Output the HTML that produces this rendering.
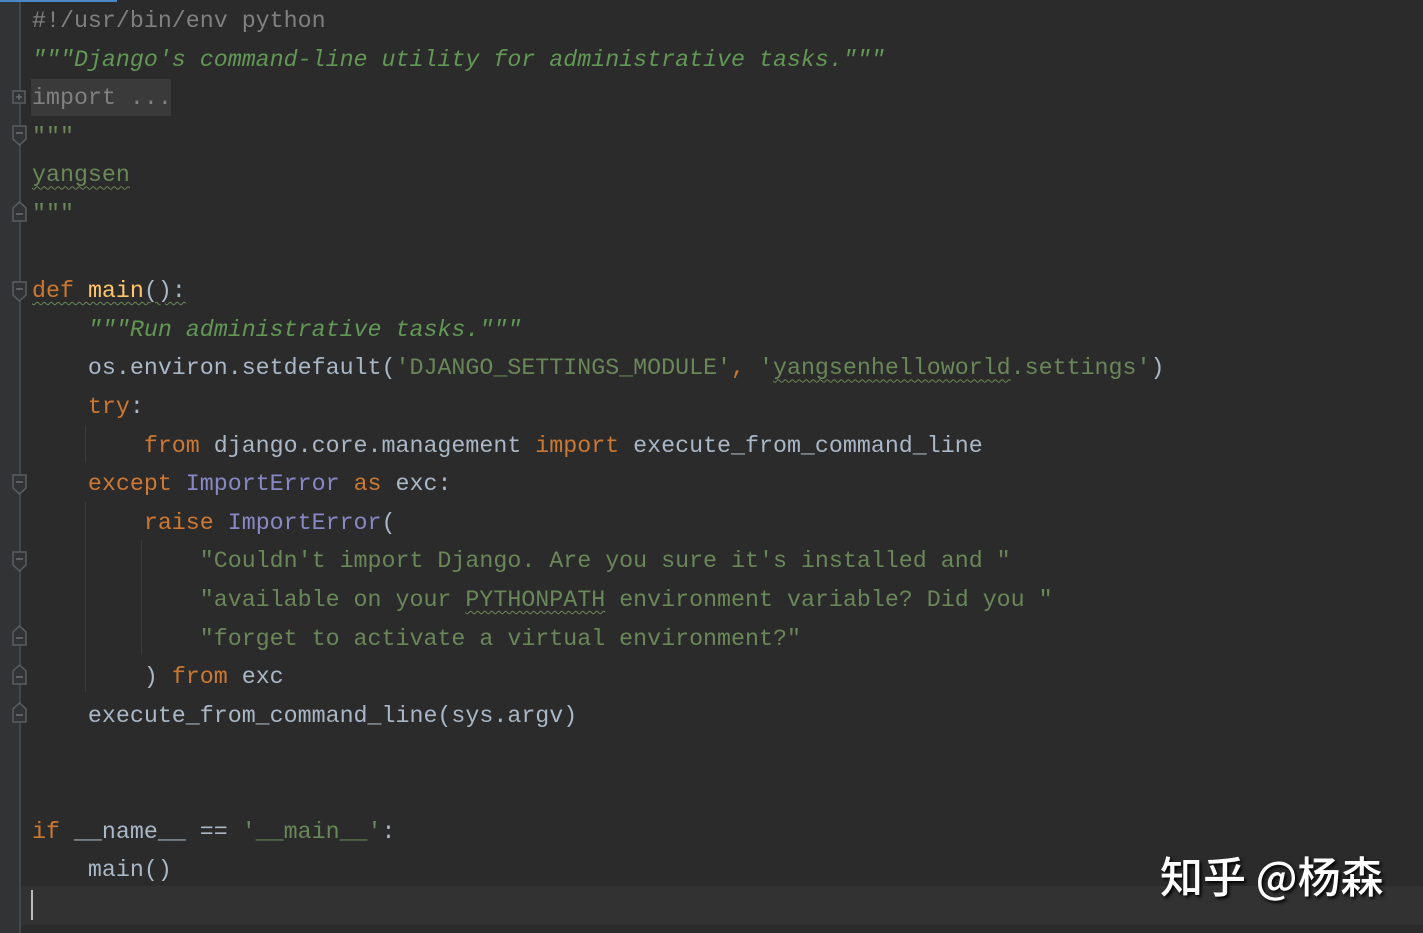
<!DOCTYPE html>
<html><head><meta charset="utf-8"><style>
body{margin:0;width:1423px;height:933px;background:#2b2b2b;overflow:hidden;position:relative;font-family:"Liberation Mono",monospace;}
.gut{position:absolute;left:0;top:0;width:20px;height:933px;background:#313335;}
.gl{position:absolute;left:19px;top:0;width:2px;height:933px;background:#444749;}
.top{position:absolute;left:0;top:0;width:117px;height:2px;background:#4a88c7;}
.cur{position:absolute;left:21px;top:886px;width:1402px;height:39px;background:#323232;}
.caret{position:absolute;left:31px;top:890px;width:2px;height:30px;background:#bbbbbb;}
.l{position:absolute;left:32px;font-size:23.3px;line-height:38.6px;height:38.6px;white-space:pre;color:#a9b7c6;}
.k{color:#cc7832}.s{color:#6a8759}.d{color:#629755;font-style:italic}.c{color:#808080}.b{color:#8888c6}.f{color:#ffc66d}
.w{text-decoration:underline wavy #6a8759;text-decoration-thickness:1px;text-underline-offset:4px}
.fold{position:absolute;left:12px;}
.wm{position:absolute;left:1160px;top:844px;font-family:"Noto Sans CJK SC",sans-serif;font-size:43px;color:#fff;font-weight:500;text-shadow:2px 2px 3px #000;white-space:pre;}
</style></head><body>
<div class="gut"></div><div class="gl"></div><div class="top"></div>
<div class="cur"></div>
<div style="position:absolute;left:31px;top:79px;width:140px;height:37px;background:#3a3a3a"></div>
<div style="position:absolute;left:85px;top:425px;width:1px;height:38px;background:#3b3b3b"></div>
<div style="position:absolute;left:85px;top:502px;width:1px;height:190px;background:#3b3b3b"></div>
<div style="position:absolute;left:141px;top:540px;width:1px;height:115px;background:#3b3b3b"></div>
<svg class="fold" style="top:90px" width="14" height="14"><rect x="1" y="1" width="12" height="12" fill="#313335" stroke="#5a5d60" stroke-width="1.5"/><path d="M4 7h6M7 4v6" stroke="#6a6d70" stroke-width="1.5"/></svg>
<svg class="fold" style="top:125px" width="15" height="22"><path d="M1 1h13v13l-6.5 6l-6.5-6z" fill="#313335" stroke="#5a5d60" stroke-width="1.5"/><path d="M4 8h7" stroke="#6a6d70" stroke-width="1.5"/></svg>
<svg class="fold" style="top:200px" width="15" height="22"><path d="M1 21h13v-13l-6.5-6l-6.5 6z" fill="#313335" stroke="#5a5d60" stroke-width="1.5"/><path d="M4 14h7" stroke="#6a6d70" stroke-width="1.5"/></svg>
<svg class="fold" style="top:281px" width="15" height="22"><path d="M1 1h13v13l-6.5 6l-6.5-6z" fill="#313335" stroke="#5a5d60" stroke-width="1.5"/><path d="M4 8h7" stroke="#6a6d70" stroke-width="1.5"/></svg>
<svg class="fold" style="top:474px" width="15" height="22"><path d="M1 1h13v13l-6.5 6l-6.5-6z" fill="#313335" stroke="#5a5d60" stroke-width="1.5"/><path d="M4 8h7" stroke="#6a6d70" stroke-width="1.5"/></svg>
<svg class="fold" style="top:551px" width="15" height="22"><path d="M1 1h13v13l-6.5 6l-6.5-6z" fill="#313335" stroke="#5a5d60" stroke-width="1.5"/><path d="M4 8h7" stroke="#6a6d70" stroke-width="1.5"/></svg>
<svg class="fold" style="top:624px" width="15" height="22"><path d="M1 21h13v-13l-6.5-6l-6.5 6z" fill="#313335" stroke="#5a5d60" stroke-width="1.5"/><path d="M4 14h7" stroke="#6a6d70" stroke-width="1.5"/></svg>
<svg class="fold" style="top:663px" width="15" height="22"><path d="M1 21h13v-13l-6.5-6l-6.5 6z" fill="#313335" stroke="#5a5d60" stroke-width="1.5"/><path d="M4 14h7" stroke="#6a6d70" stroke-width="1.5"/></svg>
<svg class="fold" style="top:701px" width="15" height="22"><path d="M1 21h13v-13l-6.5-6l-6.5 6z" fill="#313335" stroke="#5a5d60" stroke-width="1.5"/><path d="M4 14h7" stroke="#6a6d70" stroke-width="1.5"/></svg>
<div class="l" style="top:2px"><span class="c">#!/usr/bin/env python</span></div>
<div class="l" style="top:40.6px"><span class="d">"""Django's command-line utility for administrative tasks."""</span></div>
<div class="l" style="top:79.2px"><span class="c">import ...</span></div>
<div class="l" style="top:117.8px"><span class="s">"""</span></div>
<div class="l" style="top:156.4px"><span class="s w">yangsen</span></div>
<div class="l" style="top:195px"><span class="s">"""</span></div>
<div class="l" style="top:272.2px"><span class="w"><span class="k">def</span> <span class="f">main</span>():</span></div>
<div class="l" style="top:310.8px">    <span class="d">"""Run administrative tasks."""</span></div>
<div class="l" style="top:349.4px">    os.environ.setdefault(<span class="s">'DJANGO_SETTINGS_MODULE'</span><span class="k">,</span> <span class="s">'<span class="w">yangsenhelloworld</span>.settings'</span>)</div>
<div class="l" style="top:388px">    <span class="k">try</span>:</div>
<div class="l" style="top:426.6px">        <span class="k">from</span> django.core.management <span class="k">import</span> execute_from_command_line</div>
<div class="l" style="top:465.2px">    <span class="k">except</span> <span class="b">ImportError</span> <span class="k">as</span> exc:</div>
<div class="l" style="top:503.8px">        <span class="k">raise</span> <span class="b">ImportError</span>(</div>
<div class="l" style="top:542.4px">            <span class="s">"Couldn't import Django. Are you sure it's installed and "</span></div>
<div class="l" style="top:581px">            <span class="s">"available on your <span class="w">PYTHONPATH</span> environment variable? Did you "</span></div>
<div class="l" style="top:619.6px">            <span class="s">"forget to activate a virtual environment?"</span></div>
<div class="l" style="top:658.2px">        ) <span class="k">from</span> exc</div>
<div class="l" style="top:696.8px">    execute_from_command_line(sys.argv)</div>
<div class="l" style="top:812.6px"><span class="k">if</span> __name__ == <span class="s">'__main__'</span>:</div>
<div class="l" style="top:851.2px">    main()</div>
<div class="caret"></div>
<div class="wm">知乎 @杨森</div>
</body></html>
